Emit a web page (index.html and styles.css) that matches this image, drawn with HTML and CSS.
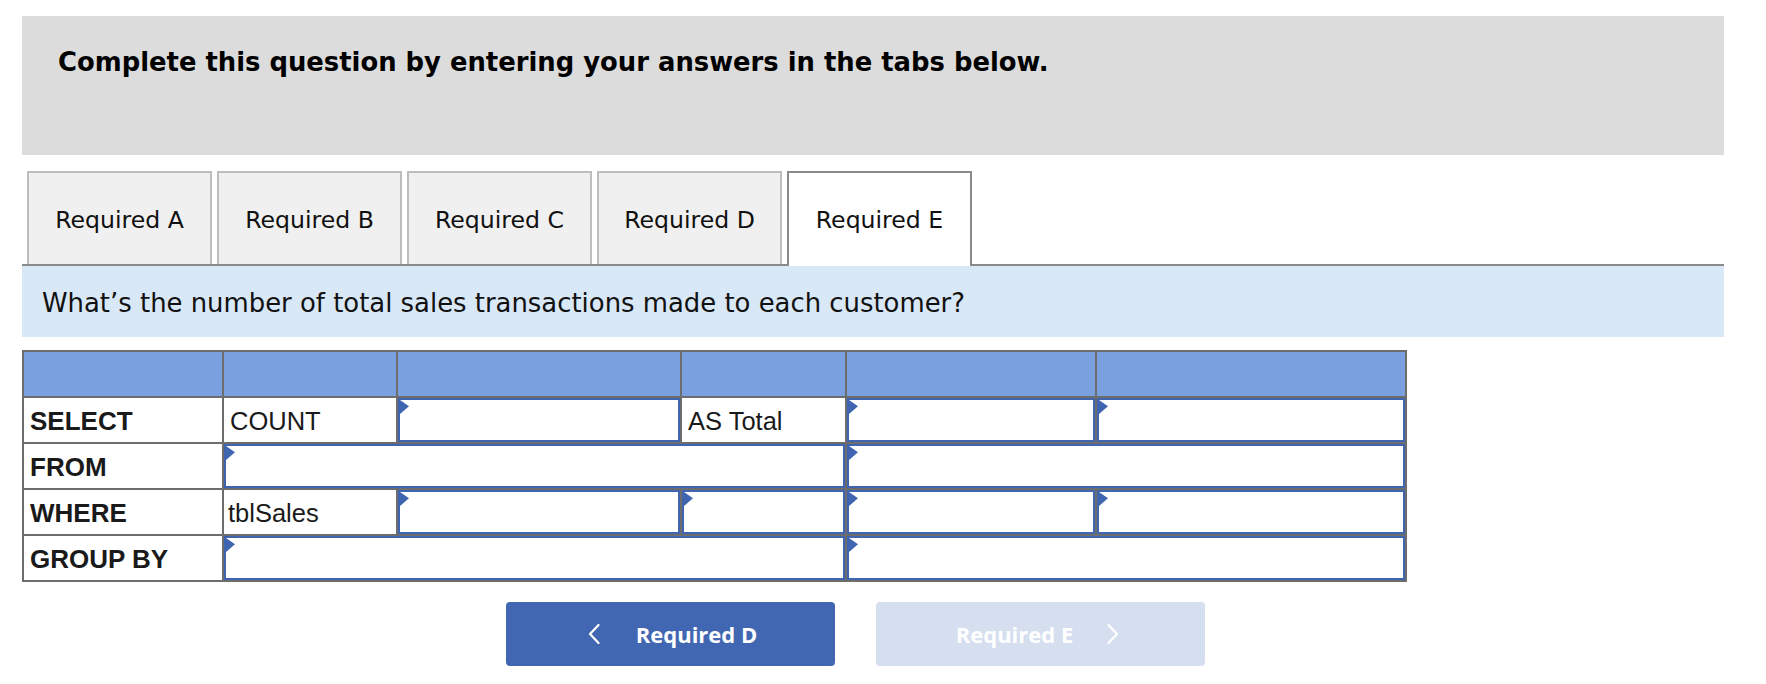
FILE: index.html
```html
<!DOCTYPE html>
<html lang="en">
<head>
<meta charset="utf-8">
<title>Required E</title>
<link rel="stylesheet" href="styles.css">
</head>
<body>
<div class="page">
  <div class="instructions">
    <h2 class="instr-text">Complete this question by entering your answers in the tabs below.</h2>
  </div>

  <div class="tabs">
    <div class="tab">Required A</div>
    <div class="tab">Required B</div>
    <div class="tab">Required C</div>
    <div class="tab">Required D</div>
    <div class="tab tab-active">Required E</div>
  </div>

  <div class="question">What’s the number of total sales transactions made to each customer?</div>

  <div class="sql-grid">
    <div class="hcell"></div>
    <div class="hcell"></div>
    <div class="hcell"></div>
    <div class="hcell"></div>
    <div class="hcell"></div>
    <div class="hcell"></div>

    <div class="label">SELECT</div>
    <div class="txt">COUNT</div>
    <div class="inp"></div>
    <div class="txt">AS Total</div>
    <div class="inp"></div>
    <div class="inp"></div>

    <div class="label">FROM</div>
    <div class="inp span3"></div>
    <div class="inp span2"></div>

    <div class="label">WHERE</div>
    <div class="txt txt-tight">tblSales</div>
    <div class="inp"></div>
    <div class="inp"></div>
    <div class="inp"></div>
    <div class="inp"></div>

    <div class="label">GROUP BY</div>
    <div class="inp span3"></div>
    <div class="inp span2"></div>
  </div>

  <div class="nav">
    <button class="nav-btn nav-prev" type="button">
      <svg class="chev" viewBox="0 0 12 20" width="12" height="20" aria-hidden="true"><polyline points="10.5,1 2,10 10.5,19" fill="none" stroke="#ffffff" stroke-width="2.2" stroke-linecap="round" stroke-linejoin="round"/></svg>
      <span>Required D</span>
    </button>
    <button class="nav-btn nav-next" type="button">
      <span>Required E</span>
      <svg class="chev" viewBox="0 0 12 20" width="12" height="20" aria-hidden="true"><polyline points="1.5,1 10,10 1.5,19" fill="none" stroke="#ffffff" stroke-width="2.2" stroke-linecap="round" stroke-linejoin="round"/></svg>
    </button>
  </div>
</div>
</body>
</html>
```

FILE: styles.css
```css
* { box-sizing: border-box; }

html, body {
  margin: 0;
  padding: 0;
  background: #ffffff;
}

.page {
  padding: 16px 42px 0 22px;
  font-family: "DejaVu Sans", Verdana, sans-serif;
  color: #111111;
}

/* instructions */
.instructions {
  background: #dcdcdc;
  height: 139px;
  padding: 31px 0 0 36px;
}
.instr-text {
  margin: 0;
  font-size: 25.85px;
  font-weight: bold;
  line-height: 30px;
  color: #000000;
}

/* tabs */
.tabs {
  margin-top: 16px;
  display: flex;
  align-items: flex-end;
  gap: 5px;
  padding-left: 5px;
  border-bottom: 2px solid #8a8a8a;
  height: 95px;
}
.tab {
  width: 185px;
  height: 93px;
  background: #f0f0f0;
  border: 2px solid #bdbdbd;
  border-bottom: none;
  padding-top: 33px;
  text-align: center;
  font-size: 23.6px;
  line-height: 28px;
  color: #111111;
}
.tab-active {
  height: 95px;
  margin-bottom: -2px;
  background: #ffffff;
  border-color: #8a8a8a;
}

/* question bar */
.question {
  background: #d9e8f7;
  height: 71px;
  padding: 22px 0 0 20px;
  font-size: 25.9px;
  line-height: 30px;
  color: #111111;
}

/* SQL grid */
.sql-grid {
  margin-top: 13px;
  display: grid;
  grid-template-columns: 198px 172px 282px 163px 248px 308px;
  grid-auto-rows: 44px;
  gap: 2px;
  padding: 2px;
  background: #6d6d6d;
  width: max-content;
  font-family: "Liberation Sans", Arial, sans-serif;
}
.hcell {
  background: #7aa0df;
}
.label {
  background: #ffffff;
  font-weight: bold;
  font-size: 26px;
  line-height: 42px;
  padding: 2px 0 0 6px;
  color: #1a1a1a;
}
.txt {
  background: #ffffff;
  font-size: 25.5px;
  line-height: 42px;
  padding: 2px 0 0 6px;
  color: #1a1a1a;
}
.txt-tight {
  padding-left: 4px;
}
.inp {
  position: relative;
  background: #ffffff;
  border: 2px solid #3f64b0;
}
.inp::before {
  content: "";
  position: absolute;
  left: 0;
  top: 0;
  width: 9px;
  height: 14px;
  background: #3f64b0;
  clip-path: polygon(0 0, 100% 45%, 0 100%);
}
.span3 { grid-column: span 3; }
.span2 { grid-column: span 2; }

/* navigation buttons */
.nav {
  margin-top: 20px;
  display: flex;
  gap: 41px;
  padding-left: 484px;
}
.nav-btn {
  width: 329px;
  height: 64px;
  border: none;
  border-radius: 4px;
  display: flex;
  align-items: center;
  justify-content: center;
  font-family: "Open Sans", sans-serif;
  font-weight: bold;
  font-size: 22px;
  color: #ffffff;
  padding: 0;
}
.nav-prev {
  background: #4267b2;
  gap: 36px;
  padding-left: 4px;
}
.nav-next {
  background: #d5dfef;
  gap: 34px;
  padding-right: 6px;
}
.chev {
  display: block;
  flex: none;
}
```
